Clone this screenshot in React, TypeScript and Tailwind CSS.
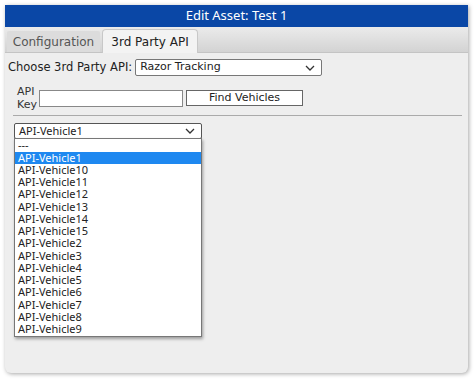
import React from 'react'

const vehicles = [
  '---',
  'API-Vehicle1',
  'API-Vehicle10',
  'API-Vehicle11',
  'API-Vehicle12',
  'API-Vehicle13',
  'API-Vehicle14',
  'API-Vehicle15',
  'API-Vehicle2',
  'API-Vehicle3',
  'API-Vehicle4',
  'API-Vehicle5',
  'API-Vehicle6',
  'API-Vehicle7',
  'API-Vehicle8',
  'API-Vehicle9',
]

function Chevron() {
  return (
    <svg width="10" height="6" viewBox="0 0 10 6" className="shrink-0">
      <path d="M1 1l4 4 4-4" fill="none" stroke="#333" strokeWidth="1.3" />
    </svg>
  )
}

export default function App() {
  return (
    <div className="w-[474px] h-[381px] bg-white pt-[5px] pl-[5px] font-['DejaVu_Sans',sans-serif]">
      <div className="w-[463px] h-[368px] flex flex-col rounded-b-[6px] bg-[#eeeeee] shadow-[1px_1px_4px_rgba(0,0,0,0.35)] overflow-hidden">
        {/* Title */}
        <div className="h-[22px] shrink-0 bg-[#0a47a6] flex items-center justify-center text-white text-[13px] font-['Noto_Sans',sans-serif]">
          Edit Asset: Test 1
        </div>

        {/* Tabs */}
        <div className="h-[26px] shrink-0 flex items-end gap-[2px] pl-[2px] bg-gradient-to-b from-[#ebebeb] to-[#d3d3d3] border-b border-[#c4c4c4]">
          <div className="h-[21px] w-[93px] flex items-center justify-center bg-[#dcdcdc] text-[#555] text-[12px] rounded-t-[2px]">
            Configuration
          </div>
          <div className="h-[24px] w-[96px] -mb-px flex items-center justify-center bg-[#f3f3f3] border border-b-0 border-[#c8c8c8] rounded-t-[4px] text-[#222] text-[12px]">
            3rd Party API
          </div>
        </div>

        {/* Body */}
        <div className="flex-1 px-[3px] pt-[6px] text-[11.5px] text-[#222]">
          <div className="flex items-center gap-[3px]">
            <span>Choose 3rd Party API:</span>
            <div className="w-[187px] h-[17px] flex items-center justify-between pl-[4px] pr-[6px] bg-white border border-[#777] rounded-[2px] text-[11px]">
              <span>Razor Tracking</span>
              <Chevron />
            </div>
          </div>

          <div className="flex items-center mt-[9px] pl-[9px]">
            <div className="w-[22px] leading-[13px] text-[11px] text-[#333]">
              API
              <br />
              Key
            </div>
            <div className="w-[144px] h-[17px] bg-white border border-[#888]" />
            <div className="w-[117px] h-[16px] ml-[3px] flex items-center justify-center bg-white border border-[#666] text-[11px]">
              Find Vehicles
            </div>
          </div>

          <div className="h-px bg-[#aaa] mt-[4px] ml-[5px] mr-[3px]" />

          <div className="relative mt-[7px] ml-[6px] w-[188px] font-['Noto_Sans',sans-serif] text-[11px]">
            <div className="h-[16px] flex items-center justify-between pl-[4px] pr-[6px] bg-white border border-[#555] rounded-[2px]">
              <span>API-Vehicle1</span>
              <Chevron />
            </div>
            <div className="absolute left-0 top-[15px] w-[188px] bg-white border border-[#777] shadow-[1px_2px_3px_rgba(0,0,0,0.35)] pb-[1px]">
              {vehicles.map((v, i) => (
                <div
                  key={v}
                  className={
                    'h-[12.25px] leading-[12.25px] px-[3px] ' +
                    (i === 1 ? 'bg-[#1e88f0] text-white' : 'text-[#222]')
                  }
                >
                  {v}
                </div>
              ))}
            </div>
          </div>
        </div>
      </div>
    </div>
  )
}
